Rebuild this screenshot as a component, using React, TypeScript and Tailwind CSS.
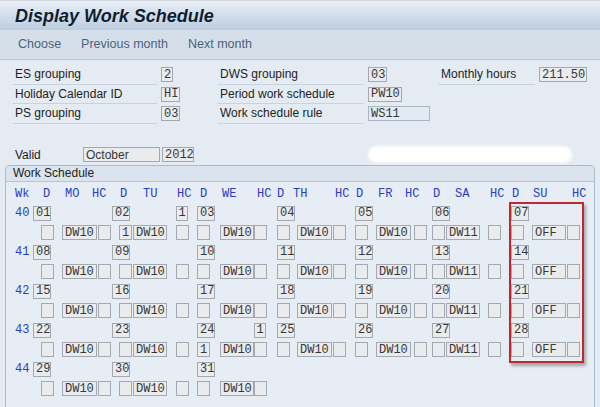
import React from "react";

const MONO = "[font-family:'Liberation_Mono',monospace]";
const SANS = "[font-family:'Liberation_Sans',Arial,sans-serif]";

type Block = {
  name: string;
  w: string;
  head: string;
  hd: string;
  hn: string;
  aHc: string;
  bSmall: string;
  bDw: string;
  bHc: string;
  code: string;
};

// offsets inside each weekday column, read off the SAP screen
const blocks: Block[] = [
  { name: "MO", w: "w-[79px]", head: "pl-[10px]", hd: "w-[22px]", hn: "w-[27px]", aHc: "ml-[46px]", bSmall: "ml-[8px]", bDw: "ml-[8px] w-[35px]", bHc: "ml-[1px]", code: "DW10" },
  { name: "TU", w: "w-[85px]", head: "pl-[8px]", hd: "w-[23px]", hn: "w-[34px]", aHc: "ml-[46px]", bSmall: "ml-[7px]", bDw: "ml-[1px] w-[34px]", bHc: "ml-[9px]", code: "DW10" },
  { name: "WE", w: "w-[80px]", head: "pl-[3px]", hd: "w-[22px]", hn: "w-[35px]", aHc: "ml-[39px]", bSmall: "ml-0", bDw: "ml-[10px] w-[34px]", bHc: "ml-0", code: "DW10" },
  { name: "TH", w: "w-[78px]", head: "pl-0", hd: "w-[16px]", hn: "w-[42px]", aHc: "ml-[38px]", bSmall: "ml-0", bDw: "ml-[7px] w-[35px]", bHc: "ml-[1px]", code: "DW10" },
  { name: "FR", w: "w-[77px]", head: "pl-[1px]", hd: "w-[22px]", hn: "w-[27px]", aHc: "ml-[41px]", bSmall: "ml-0", bDw: "ml-[8px] w-[35px]", bHc: "ml-[3px]", code: "DW10" },
  { name: "SA", w: "w-[79px]", head: "pl-[1px]", hd: "w-[22px]", hn: "w-[35px]", aHc: "ml-[38px]", bSmall: "ml-0", bDw: "ml-[1px] w-[34px]", bHc: "ml-[8px]", code: "DW11" },
  { name: "SU", w: "w-[80px]", head: "pl-[1px]", hd: "w-[21px]", hn: "w-[39px]", aHc: "ml-[38px]", bSmall: "ml-0", bDw: "ml-[8px] w-[34px]", bHc: "ml-[1px]", code: "OFF" },
];

const weeks = [
  { wk: "40", days: ["01", "02", "03", "04", "05", "06", "07"], hol: 1 },
  { wk: "41", days: ["08", "09", "10", "11", "12", "13", "14"], hol: -1 },
  { wk: "42", days: ["15", "16", "17", "18", "19", "20", "21"], hol: -1 },
  { wk: "43", days: ["22", "23", "24", "25", "26", "27", "28"], hol: 2 },
  { wk: "44", days: ["29", "30", "31"], hol: -1 },
];

const Box = ({ v = "", className = "", sans = false }: { v?: string; className?: string; sans?: boolean }) => (
  <div
    className={`h-[15px] shrink-0 border border-[#a3a9b0] bg-[#e9ebed] flex items-center px-[2px] leading-none text-[12px] text-[#383838] ${
      sans ? SANS : MONO
    } ${className}`}
  >
    {v}
  </div>
);

const FieldRow = ({ children }: { children: React.ReactNode }) => (
  <div className="flex items-center h-[19.5px] pl-[13px]">{children}</div>
);

const Label = ({ text, className }: { text: string; className: string }) => (
  <div className={`h-full flex items-center border-b border-[#c9d3dd] text-[12px] text-[#1e1e1e] ${className}`}>
    {text}
  </div>
);

export default function App() {
  return (
    <div className={`w-[600px] h-[407px] overflow-hidden bg-[#e4ebf2] ${SANS}`}>
      <div className="h-[30px] border-t border-[#d3dae2] bg-linear-to-b from-[#e8eef5] to-[#bccde0] flex items-center pl-[15px]">
        <span className="text-[18px] font-bold italic text-[#0f1f31] leading-none">Display Work Schedule</span>
      </div>
      <div className="h-[30px] bg-[#d5dfea] border-b border-[#b9c7d5] flex items-center pl-[18px] gap-[20px] text-[12.5px] text-[#48637f]">
        <span>Choose</span>
        <span>Previous month</span>
        <span>Next month</span>
      </div>

      <div className="pt-[5px]">
        <FieldRow>
          <div className="flex items-center h-full w-[205px]">
            <Label text="ES grouping" className="w-[144px] pl-[2px]" />
            <Box v="2" className="ml-[4px] w-[12px]" />
          </div>
          <div className="flex items-center h-full w-[220px]">
            <Label text="DWS grouping" className="w-[146px] pl-[2px]" />
            <Box v="03" className="ml-[4px] w-[19px]" />
          </div>
          <div className="flex items-center h-full">
            <Label text="Monthly hours" className="w-[97px] pl-[3px]" />
            <Box v="211.50" className="ml-[4px] w-[48px]" />
          </div>
        </FieldRow>
        <FieldRow>
          <div className="flex items-center h-full w-[205px]">
            <Label text="Holiday Calendar ID" className="w-[144px] pl-[2px]" />
            <Box v="HI" className="ml-[4px] w-[19px]" />
          </div>
          <div className="flex items-center h-full w-[220px]">
            <Label text="Period work schedule" className="w-[146px] pl-[2px]" />
            <Box v="PW10" className="ml-[4px] w-[34px]" />
          </div>
        </FieldRow>
        <FieldRow>
          <div className="flex items-center h-full w-[205px]">
            <Label text="PS grouping" className="w-[144px] pl-[2px]" />
            <Box v="03" className="ml-[4px] w-[19px]" />
          </div>
          <div className="flex items-center h-full w-[220px]">
            <Label text="Work schedule rule" className="w-[146px] pl-[2px]" />
            <Box v="WS11" className="ml-[4px] w-[62px] !bg-[#e2ebf4] !border-[#a9b5c1]" />
          </div>
        </FieldRow>

        <div className="mt-[21px] h-[20px] flex items-center pl-[13px]">
          <div className="w-[70px] pl-[2px] text-[12px] text-[#1e1e1e]">Valid</div>
          <Box v="October" sans className="w-[77px]" />
          <Box v="2012" className="ml-[2px] w-[32px]" />
          <div className="ml-[174px] w-[204px] h-[17px] rounded-full bg-white blur-[1.5px]" />
        </div>

        <div className="relative ml-[5px] w-[590px] h-[260px] border border-[#a9bbcd] rounded-t-[4px] bg-[#e6edf4]">
          <div className="h-[16px] flex items-center pl-[7px] text-[12px] text-[#222] bg-[#dbe4ee] border-b border-[#b7c6d5] rounded-t-[4px]">
            Work Schedule
          </div>

          <div className={`flex h-[22px] items-center pt-[2px] text-[12px] text-[#2b3bcf] ${MONO}`}>
            <div className="w-[27px] pl-[9px] shrink-0">Wk</div>
            {blocks.map((b) => (
              <div key={b.name} className={`flex shrink-0 ${b.w} ${b.head}`}>
                <span className={b.hd}>D</span>
                <span className={b.hn}>{b.name}</span>
                <span>HC</span>
              </div>
            ))}
          </div>

          {weeks.map((wk) => (
            <div key={wk.wk} className="flex">
              <div className="w-[27px] shrink-0">
                <div className={`h-[19.5px] flex items-center pl-[9px] text-[12px] text-[#2d3dcf] ${MONO}`}>{wk.wk}</div>
              </div>
              {blocks.map((b, i) => {
                const day = wk.days[i];
                const hol = wk.hol === i;
                return (
                  <div key={b.name} className={`shrink-0 ${b.w}`}>
                    <div className="h-[19.5px] flex items-center">
                      {day && <Box v={day} className="w-[18px]" />}
                      {day && hol && <Box v="1" className={`w-[12px] justify-center ${b.aHc}`} />}
                    </div>
                    <div className="h-[19.5px] flex items-center">
                      {day && (
                        <>
                          <Box v={hol ? "1" : ""} className={`w-[13px] justify-center ${b.bSmall}`} />
                          <Box v={b.code} className={b.bDw} />
                          <Box className={`w-[13px] ${b.bHc}`} />
                        </>
                      )}
                    </div>
                  </div>
                );
              })}
            </div>
          ))}

          <div className="absolute left-[503px] top-[36px] w-[75px] h-[161px] border-2 border-[#c3262c] shadow-[2px_3px_3px_rgba(0,0,0,0.3)] pointer-events-none" />
        </div>
      </div>
    </div>
  );
}
